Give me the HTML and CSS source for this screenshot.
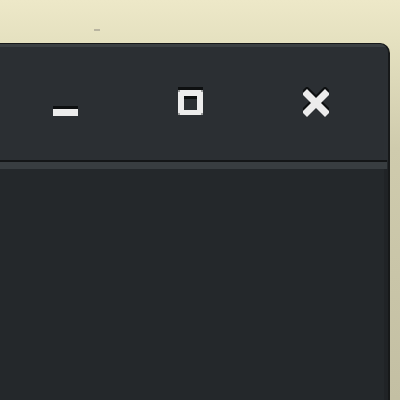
FILE: index.html
```html
<!DOCTYPE html>
<html>
<head>
<meta charset="utf-8">
<link rel="stylesheet" href="styles.css">
</head>
<body>
<div class="desk">
  <span class="speck"></span>
  <div class="window">
    <div class="titlebar">
      <div class="btn btn-min">
        <svg width="25" height="10" viewBox="0 0 25 10" shape-rendering="crispEdges">
          <rect x="0" y="0" width="25" height="3" fill="#0d0f10"/>
          <rect x="0" y="3" width="25" height="7" fill="#ececec"/>
        </svg>
      </div>
      <div class="btn btn-max">
        <svg width="25" height="28" viewBox="0 0 25 28" shape-rendering="crispEdges">
          <rect x="0" y="0" width="25" height="3" fill="#0d0f10"/>
          <rect x="0" y="3" width="25" height="25" fill="#ececec"/>
          <rect x="6" y="9" width="13" height="14" fill="#2b2f33"/>
          <rect x="6" y="9" width="13" height="3" fill="#0d0f10"/>
          <rect x="0" y="3" width="2" height="2" fill="#9a9c9c"/>
          <rect x="23" y="3" width="2" height="2" fill="#9a9c9c"/>
          <rect x="0" y="26" width="2" height="2" fill="#9a9c9c"/>
          <rect x="23" y="26" width="2" height="2" fill="#9a9c9c"/>
        </svg>
      </div>
      <div class="btn btn-close">
        <svg width="26" height="30" viewBox="0 0 26 30">
          <g stroke="#0d0f10" stroke-width="7" stroke-linecap="square">
            <line x1="4" y1="4" x2="22" y2="22"/>
            <line x1="22" y1="4" x2="4" y2="22"/>
          </g>
          <g stroke="#ececec" stroke-width="7" stroke-linecap="square">
            <line x1="4" y1="7" x2="22" y2="25"/>
            <line x1="22" y1="7" x2="4" y2="25"/>
          </g>
        </svg>
      </div>
    </div>
    <div class="separator"></div>
    <div class="content"></div>
  </div>
</div>
</body>
</html>
```
FILE: styles.css
```css
html, body {
  margin: 0;
  padding: 0;
  width: 400px;
  height: 400px;
  overflow: hidden;
}
.desk {
  position: relative;
  width: 400px;
  height: 400px;
  background: linear-gradient(to bottom, #ede8c8 0%, #e5e1c0 10%, #cfcbad 37%, #c3bfa3 100%);
  display: flex;
  flex-direction: column;
  padding-top: 43px;
  box-sizing: border-box;
}
.speck {
  position: absolute;
  left: 94px;
  top: 29px;
  width: 6px;
  height: 2px;
  background: #b9b5a0;
}
.window {
  width: 390px;
  flex: 1;
  display: flex;
  flex-direction: column;
  background: #24282b;
  border-top-right-radius: 10px;
  border-top: 1px solid #17191a;
  border-right: 2px solid #17191a;
  box-sizing: border-box;
  overflow: hidden;
}
.titlebar {
  height: 116px;
  background: #2b2f33;
  border-top: 3px solid #3a3f42;
  box-sizing: border-box;
  display: grid;
  grid-template-columns: repeat(3, 125px);
  padding-left: 3px;
}
.btn {
  display: flex;
  justify-content: center;
}
.btn svg { display: block; }
.btn-min { padding-top: 59px; }
.btn-max { padding-top: 40px; }
.btn-close { padding-top: 40px; }
.separator {
  border-top: 2px solid #141617;
  background: #383d40;
  height: 7px;
  margin-right: 1px;
}
.content {
  flex: 1;
  background: #24282b;
  border-right: 4px solid #202326;
}
```
